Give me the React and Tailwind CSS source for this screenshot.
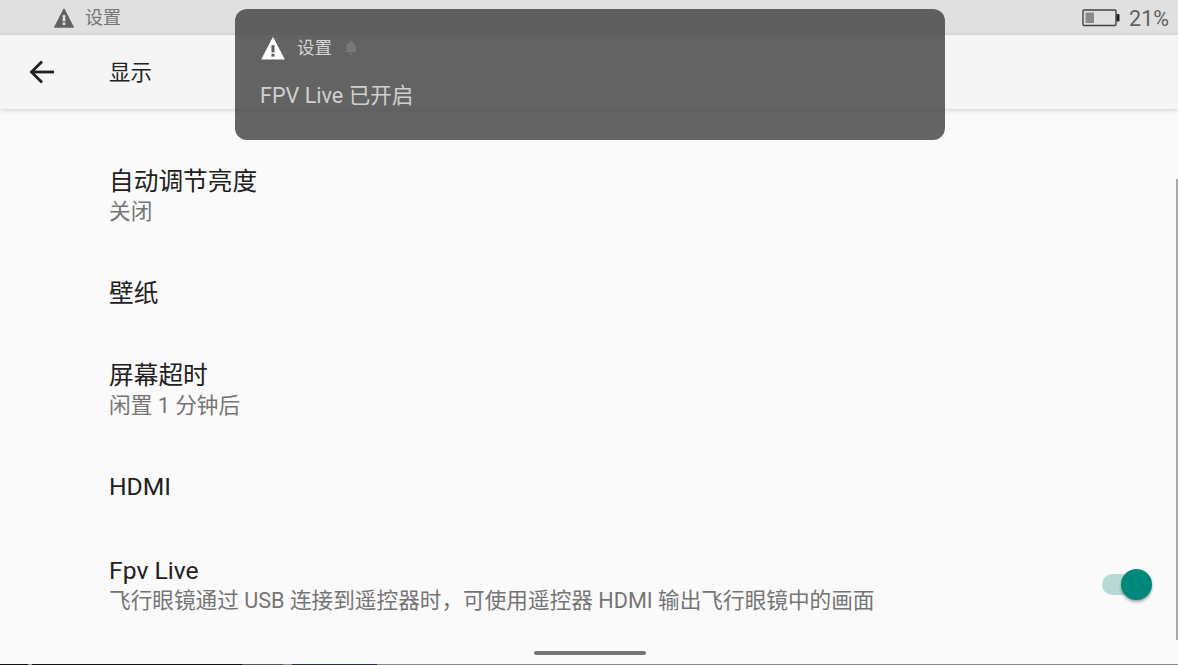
import React from "react";

const font = "font-['Roboto','Noto_Sans_CJK_SC',sans-serif]";

function Warn({ className, fill, hole }) {
  return (
    <svg viewBox="0 0 24 24" className={className}>
      <path d="M0.600 23 L12 1 L23.400 23 Z" fill={fill} stroke={fill} strokeWidth="1.200" strokeLinejoin="round" />
      <rect x="10.400" y="8.500" width="3.200" height="7.500" fill={hole} />
      <rect x="10.400" y="17.500" width="3.200" height="3" fill={hole} />
    </svg>
  );
}

function Row({ title, sub, className = "", right }) {
  return (
    <div className={`flex items-center pl-[109px] pr-[26px] ${className}`}>
      <div className="flex-1">
        <div className="text-[24.7px] leading-[28px] text-[#212121]">{title}</div>
        {sub && <div className="mt-[3px] text-[21.65px] leading-[26px] text-[#757575]">{sub}</div>}
      </div>
      {right}
    </div>
  );
}

export default function App() {
  return (
    <div className={`relative h-[665px] w-[1178px] overflow-hidden bg-[#fafafa] ${font}`}>
      <div className="flex h-[35px] items-center bg-[#e0e0e0] pl-[53px] pr-[9px]">
        <Warn className="h-[20px] w-[22px]" fill="#616161" hole="#e0e0e0" />
        <span className="ml-[10px] text-[18px] leading-[36px] text-[#757575]">设置</span>
        <div className="ml-auto flex items-center gap-[9px]">
          <svg viewBox="0 0 38 18" className="h-[18px] w-[38px]">
            <rect x="1" y="1" width="33" height="15.500" rx="1" fill="none" stroke="#424242" strokeWidth="1.400" />
            <rect x="3.500" y="3.500" width="8.500" height="10.500" fill="#8a8a8a" />
            <rect x="34.500" y="5" width="3" height="7.500" rx="1" fill="#212121" />
          </svg>
          <span className="pt-[2px] text-[21.5px] leading-none text-[#616161]">21%</span>
        </div>
      </div>

      <div className="flex h-[74px] items-center bg-[#f5f5f5] pl-[29px] shadow-[0_1px_5px_rgba(0,0,0,0.18)]">
        <svg viewBox="0 0 25 24" className="h-[24px] w-[25px]" fill="none" stroke="#212121" strokeWidth="2.800">
          <path d="M25 12H2.500" />
          <path d="M13 1.500L2.500 12L13 22.500" />
        </svg>
        <span className="ml-[55px] pt-[2px] text-[21.5px] text-[#212121]">显示</span>
      </div>

      <div className="flex flex-col">
        <Row className="mt-[59px]" title="自动调节亮度" sub="关闭" />
        <Row className="mt-[55px]" title="壁纸" />
        <Row className="mt-[54px]" title="屏幕超时" sub="闲置 1 分钟后" />
        <Row className="mt-[54px]" title="HDMI" />
        <Row
          className="mt-[56px]"
          title="Fpv Live"
          sub="飞行眼镜通过 USB 连接到遥控器时，可使用遥控器 HDMI 输出飞行眼镜中的画面"
          right={
            <div className="relative mb-[3px] h-[21px] w-[50px]">
              <div className="absolute left-0 top-0 h-[21px] w-[40px] rounded-full bg-[#b8dad7]" />
              <div className="absolute right-0 top-[-5px] h-[31px] w-[31px] rounded-full bg-[#00897b] shadow-[0_2px_3px_rgba(0,0,0,0.35)]" />
            </div>
          }
        />
      </div>

      <div className="absolute right-0 top-[179px] h-[461px] w-[2px] bg-[#a8a8a8]" />
      <div className="absolute bottom-[10px] left-[534px] h-[4px] w-[112px] rounded-full bg-[#757575]" />
      <div className="absolute bottom-0 left-0 flex h-[1px] w-full bg-[#8a8a8a]">
        <div className="w-[28px] bg-[#111111]" />
        <div className="w-[4px] bg-[#9a9a9a]" />
        <div className="w-[210px] bg-[#111111]" />
        <div className="w-[41px] bg-[#555555]" />
        <div className="w-[9px] bg-[#8a8a8a]" />
        <div className="w-[85px] bg-[#2a3140]" />
      </div>

      <div className="absolute left-[235px] top-[9px] h-[131px] w-[710px] rounded-[12px] bg-[#3e3e3e]/80 px-[25px] pt-[27px]">
        <div className="flex items-center">
          <Warn className="h-[23px] w-[26px]" fill="#ffffff" hole="#5f5f5f" />
          <span className="ml-[11px] text-[17.5px] leading-[24px] text-[#d4d4d4]">设置</span>
          <svg viewBox="0 0 24 24" className="ml-[11px] h-[16px] w-[16px]" fill="#787878">
            <path d="M12 22.500a2.500 2.500 0 0 0 2.500-2.500h-5a2.500 2.500 0 0 0 2.500 2.500zm7-6.500v-5c0-3.300-2-6-5-6.700V3.500a2 2 0 0 0-4 0v.8C7 5 5 7.700 5 11v5l-2 2.500h18z" />
          </svg>
        </div>
        <div className="mt-[23px] text-[21.6px] leading-[26px] text-[#d0d0d0]">FPV Live 已开启</div>
      </div>
    </div>
  );
}
